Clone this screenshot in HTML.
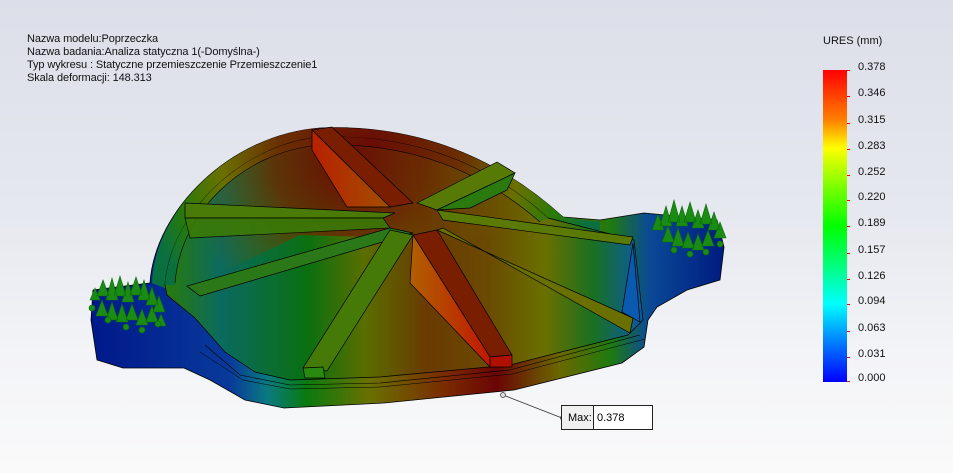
<!DOCTYPE html>
<html><head><meta charset="utf-8"><style>
html,body{margin:0;padding:0}
body{width:953px;height:473px;overflow:hidden;position:relative;font-family:"Liberation Sans","DejaVu Sans",sans-serif;background:linear-gradient(180deg,#dcdfe9 0%,#e6e8ef 45%,#f3f4f7 75%,#fafafb 100%)}
.info{position:absolute;left:27px;top:33px;font-size:11px;line-height:13px;color:#111;letter-spacing:-0.1px}
.lg{position:absolute;font-size:11px;color:#111}
.bar{position:absolute;left:823px;top:70px;width:24px;height:312px;background:linear-gradient(180deg,#ff0000 0%,#ff8000 16%,#ffff00 25%,#80ff00 37%,#00ff00 50%,#00ff80 63%,#00ffff 75%,#0080ff 87%,#0000ff 100%)}
.tk{position:absolute;left:847px;width:3px;height:1px;background:#f00}
.box{position:absolute;left:561px;top:405px;width:92px;height:25px;border:1px solid #222;box-sizing:border-box;background:#fff;font-size:11px}
.box span{position:absolute;top:6px}
</style></head><body>
<div class="info">Nazwa modelu:Poprzeczka<br>Nazwa badania:Analiza statyczna 1(-Domyślna-)<br>Typ wykresu : Statyczne przemieszczenie Przemieszczenie1<br>Skala deformacji: 148.313</div>
<div class="lg" style="left:823px;top:35px">URES (mm)</div>
<div class="bar"></div>
<div class="tk" style="top:70px"></div><div class="tk" style="top:96px"></div><div class="tk" style="top:123px"></div><div class="tk" style="top:149px"></div><div class="tk" style="top:175px"></div><div class="tk" style="top:200px"></div><div class="tk" style="top:226px"></div><div class="tk" style="top:253px"></div><div class="tk" style="top:279px"></div><div class="tk" style="top:304px"></div><div class="tk" style="top:331px"></div><div class="tk" style="top:357px"></div><div class="tk" style="top:381px"></div>
<div class="lg" style="left:858px;top:61px">0.378</div>
<div class="lg" style="left:858px;top:87px">0.346</div>
<div class="lg" style="left:858px;top:114px">0.315</div>
<div class="lg" style="left:858px;top:140px">0.283</div>
<div class="lg" style="left:858px;top:166px">0.252</div>
<div class="lg" style="left:858px;top:191px">0.220</div>
<div class="lg" style="left:858px;top:217px">0.189</div>
<div class="lg" style="left:858px;top:244px">0.157</div>
<div class="lg" style="left:858px;top:270px">0.126</div>
<div class="lg" style="left:858px;top:295px">0.094</div>
<div class="lg" style="left:858px;top:322px">0.063</div>
<div class="lg" style="left:858px;top:348px">0.031</div>
<div class="lg" style="left:858px;top:372px">0.000</div>

<svg width="953" height="473" style="position:absolute;left:0;top:0">
<defs>
<linearGradient id="g1" x1="90" y1="0" x2="725" y2="0" gradientUnits="userSpaceOnUse">
<stop offset="0" stop-color="#00188a"/><stop offset="0.22" stop-color="#083a9a"/><stop offset="0.28" stop-color="#0a7a80"/><stop offset="0.34" stop-color="#0a7a10"/><stop offset="0.44" stop-color="#6a7000"/><stop offset="0.56" stop-color="#7a2a00"/><stop offset="0.64" stop-color="#6a0505"/><stop offset="0.74" stop-color="#6a6800"/><stop offset="0.82" stop-color="#1f7a10"/><stop offset="0.88" stop-color="#0a4a96"/><stop offset="1" stop-color="#001a80"/>
</linearGradient>
<linearGradient id="g3" x1="165" y1="0" x2="640" y2="0" gradientUnits="userSpaceOnUse">
<stop offset="0" stop-color="#2a7a08"/><stop offset="0.12" stop-color="#0a6a60"/><stop offset="0.3" stop-color="#0a7010"/><stop offset="0.42" stop-color="#5a6e00"/><stop offset="0.55" stop-color="#6a3a02"/><stop offset="0.68" stop-color="#6a4a02"/><stop offset="0.8" stop-color="#6a7000"/><stop offset="0.9" stop-color="#1a7020"/><stop offset="1" stop-color="#0a5aa0"/>
</linearGradient>
<radialGradient id="g4" cx="370" cy="150" r="230" gradientUnits="userSpaceOnUse">
<stop offset="0" stop-color="#6a0a05"/><stop offset="0.4" stop-color="#6a3003"/><stop offset="0.65" stop-color="#6a7000"/><stop offset="0.85" stop-color="#2a7a08"/><stop offset="1" stop-color="#0a7040"/>
</radialGradient>
<radialGradient id="g2" cx="350" cy="160" r="170" gradientUnits="userSpaceOnUse">
<stop offset="0" stop-color="#6a0a05" stop-opacity="1"/><stop offset="0.45" stop-color="#6a2a03" stop-opacity="0.85"/><stop offset="0.8" stop-color="#6a5000" stop-opacity="0.3"/><stop offset="1" stop-color="#6a6000" stop-opacity="0"/>
</radialGradient>
<linearGradient id="r1" x1="0" y1="0" x2="1" y2="0"><stop offset="0" stop-color="#b82000"/><stop offset="1" stop-color="#a05000"/></linearGradient>
<linearGradient id="r2" x1="0" y1="0" x2="1" y2="0"><stop offset="0" stop-color="#b06000"/><stop offset="1" stop-color="#c01800"/></linearGradient>
</defs>
<!-- base body -->
<path d="M150,283 C155,210 230,135 320,128 C420,124 500,160 563,217 L600,220 L644,213 L717,220 L724,247 L720,280 L687,290 L657,307 L648,320 L644,347 L622,363 L514,390 L384,403 L284,408 L245,400 L210,380 L184,368 L123,368 L97,360 L91,320 L93,290 Z" fill="url(#g1)" stroke="#000" stroke-width="0.8"/>
<!-- dome outer band -->
<path d="M152,283 C155,210 230,135 320,128 C420,124 500,160 563,217 L600,222 L600,240 L170,290 Z" fill="url(#g4)"/>
<!-- inner surface -->
<path d="M165,285 C170,215 240,145 320,137 C415,134 490,165 548,218 L634,240 L643,320 L628,335 L510,365 L380,377 L290,380 L255,372 L225,352 L195,318 L167,295 Z" fill="url(#g3)" stroke="#000" stroke-width="0.7"/>
<path d="M175,283 C180,215 240,152 320,145 C410,142 480,170 540,222 L470,240 L300,235 L185,290 Z" fill="url(#g2)"/>
<path d="M165,285 C170,215 240,145 320,137 C415,134 490,165 548,218 L540,222 C480,170 410,142 320,145 C240,152 180,215 175,285 Z" fill="url(#g4)"/>
<path d="M175,283 C180,215 240,152 320,145 C410,142 480,170 540,222" fill="none" stroke="#000" stroke-width="0.6"/>
<path d="M205,345 L240,375 L290,385 L380,383 L510,370 L640,335" fill="none" stroke="#000" stroke-width="0.6"/>
<path d="M200,352 L243,380 L290,389 L380,387 L512,374 L645,339" fill="none" stroke="#000" stroke-width="0.5"/>
<!-- ribs -->
<g stroke="#000" stroke-width="0.7">
<path d="M185,203 L395,213 L383,218 L185,218 Z" fill="#4a7a08"/>
<path d="M185,218 L383,218 L390,228 L190,238 Z" fill="#3a7a08" opacity="0.9"/>
<path d="M390,228 L413,233 L200,296 L187,286 Z" fill="#2a7818"/>
<path d="M390,230 L413,235 L327,371 L303,368 Z" fill="#467a08"/>
<path d="M303,368 L323,367 L325,378 L305,378 Z" fill="#2a8a10"/>
<path d="M437,210 L633,237 L630,245 L443,220 Z" fill="#5a7a05"/>
<path d="M437,230 L633,318 L630,333 L443,228 Z" fill="#6a7000"/>
<path d="M413,235 L437,230 L512,355 L490,357 Z" fill="#7a1e02"/>
<path d="M413,235 L490,357 L490,367 L410,283 Z" fill="url(#r2)"/>
<path d="M490,357 L512,355 L512,367 L490,367 Z" fill="#b01000"/>
<path d="M312,130 L332,127 L413,203 L390,207 Z" fill="#7a1e02"/>
<path d="M312,130 L390,207 L347,207 L312,150 Z" fill="url(#r1)"/>
<path d="M417,203 L497,162 L515,173 L437,210 Z" fill="#567a05"/>
<path d="M515,173 L507,190 L470,208 L437,210 Z" fill="#2a7a10"/>
<path d="M633,243 L640,322 L622,312 Z" fill="#0a5ab0"/>
</g>
<!-- fixture trees -->
<g fill="#1a8c14" stroke="#0b6a08" stroke-width="0.6">
<path d="M90,300 l5,-12 l5,12z M97,296 l6,-16 l6,16z M106,300 l6,-22 l6,22z M114,296 l6,-20 l6,20z M122,302 l6,-20 l6,20z M130,295 l6,-18 l6,18z M138,300 l6,-20 l6,20z M146,305 l6,-18 l6,18z M153,312 l6,-16 l6,16z M96,316 l6,-16 l6,16z M106,320 l6,-18 l6,18z M116,322 l6,-18 l6,18z M126,320 l6,-16 l6,16z M136,325 l6,-16 l6,16z M146,322 l6,-16 l6,16z M156,326 l5,-12 l5,12z"/>
<circle cx="108" cy="320" r="3"/><circle cx="126" cy="327" r="3"/><circle cx="142" cy="330" r="3"/><circle cx="158" cy="324" r="3"/><circle cx="92" cy="308" r="3"/>
<path d="M652,230 l6,-16 l6,16z M660,226 l6,-20 l6,20z M668,222 l6,-22 l6,22z M676,226 l6,-20 l6,20z M684,222 l6,-20 l6,20z M692,228 l6,-18 l6,18z M700,224 l6,-20 l6,20z M708,230 l6,-18 l6,18z M714,238 l6,-16 l6,16z M662,242 l6,-16 l6,16z M672,246 l6,-18 l6,18z M682,248 l6,-16 l6,16z M692,250 l6,-16 l6,16z M702,246 l6,-16 l6,16z"/>
<circle cx="674" cy="250" r="3"/><circle cx="690" cy="254" r="3"/><circle cx="706" cy="252" r="3"/><circle cx="720" cy="244" r="3"/>
</g>
<line x1="503" y1="395" x2="562" y2="418" stroke="#333" stroke-width="0.8"/>
<circle cx="503" cy="395" r="2.5" fill="#ddd" stroke="#333" stroke-width="0.7"/>
<circle cx="563" cy="418" r="2.5" fill="#fff" stroke="#333" stroke-width="0.7"/>
</svg>
<div class="box"><div style="position:absolute;left:0;top:0;width:31px;height:23px;background:#f0f0f0;border-right:1px solid #222"></div><span style="left:6px">Max:</span><span style="left:35px">0.378</span></div>
</body></html>
